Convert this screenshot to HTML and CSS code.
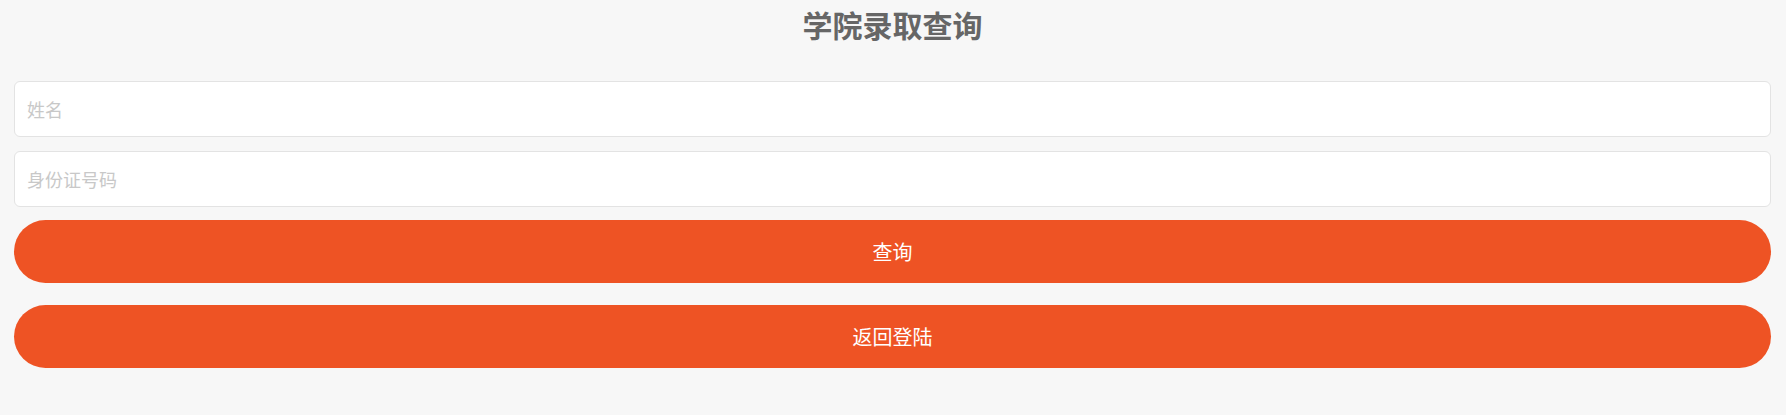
FILE: index.html
```html
<!DOCTYPE html>
<html lang="zh-CN">
<head>
<meta charset="utf-8">
<title>学院录取查询</title>
<link rel="stylesheet" href="styles.css">
</head>
<body>
<div class="page">
  <h1 class="title">学院录取查询</h1>
  <form class="form">
    <input class="field" type="text" placeholder="姓名">
    <input class="field" type="text" placeholder="身份证号码">
    <button class="btn btn-query" type="button">查询</button>
    <button class="btn btn-back" type="button">返回登陆</button>
  </form>
</div>
</body>
</html>
```
FILE: styles.css
```css
html, body {
  margin: 0;
  padding: 0;
  background: #f7f7f7;
}
body {
  font-family: "Noto Sans CJK SC", "Liberation Sans", sans-serif;
}
.page {
  padding: 0 15px 0 14px;
}
.title {
  margin: 0;
  padding-top: 4px;
  height: 81px;
  box-sizing: border-box;
  text-align: center;
  font-size: 30px;
  line-height: 40px;
  font-weight: bold;
  color: #666666;
}
.form {
  display: flex;
  flex-direction: column;
}
.field {
  display: block;
  height: 56px;
  box-sizing: border-box;
  margin: 0 0 14px 0;
  padding: 0 12px;
  border: 1px solid #e3e3e3;
  border-radius: 6px;
  background: #ffffff;
  font-family: inherit;
  font-size: 18px;
  color: #333;
  outline: none;
}
.field::placeholder {
  color: #c8c8c8;
}
.field:last-of-type {
  margin-bottom: 13px;
}
.btn {
  display: block;
  height: 63px;
  border: none;
  border-radius: 32px;
  background: #ee5324;
  color: #ffffff;
  font-family: inherit;
  font-size: 20px;
  padding: 0;
  cursor: pointer;
}
.btn-query {
  margin-bottom: 22px;
}
```
